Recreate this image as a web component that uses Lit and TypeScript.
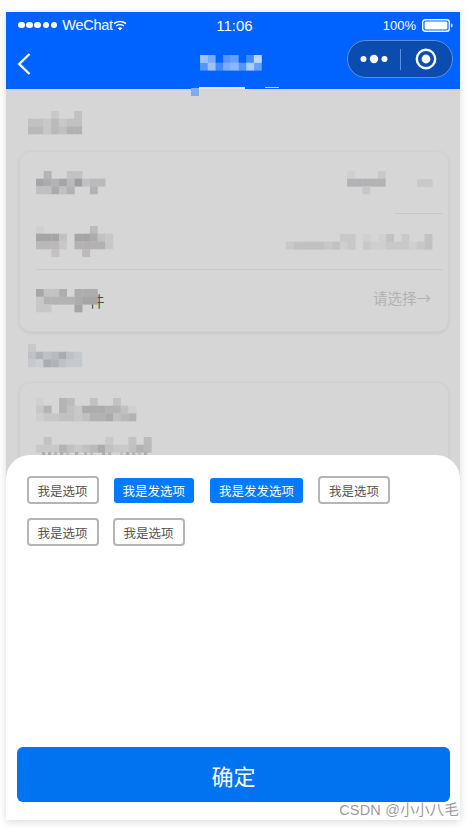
import { LitElement, html, css, svg } from "lit";
import { customElement, property } from "lit/decorators.js";

@customElement("pixel-block")
class PixelBlock extends LitElement {
  @property({ type: Array }) rows: string[] = [];
  @property({ type: Number }) cell = 7.7;
  @property() tone = "gray";

  static styles = css`
    :host { display: block; line-height: 0; }
    svg { display: block; overflow: visible; }
  `;

  private fill(d: number, col: number, row: number) {
    if (this.tone === "white") {
      const a = 0.12 + d * 0.07;
      return `rgba(255,255,255,${a})`;
    }
    const g = 214 - d * 7;
    const tint = (col * 3 + row * 5) % 3;
    if (this.tone === "cool") return `rgb(${g - 3},${g + 1},${g + 5})`;
    return `rgb(${g + (tint === 0 ? 2 : 0)},${g - (tint === 1 ? 2 : 0)},${g + (tint === 2 ? 2 : 0)})`;
  }

  render() {
    const w = Math.max(...this.rows.map((r) => r.length)) * this.cell;
    const h = this.rows.length * this.cell;
    return html`<svg width=${w} height=${h} viewBox="0 0 ${w} ${h}">
      ${this.rows.map((r, y) =>
        [...r].map((c, x) =>
          c === "."
            ? null
            : svg`<rect x=${x * this.cell} y=${y * this.cell} width=${this.cell + 0.2} height=${this.cell + 0.2} fill=${this.fill(+c, x, y)}></rect>`
        )
      )}
    </svg>`;
  }
}

const TITLE_A = ["...2..3", "3324233", "4424355"];
const TITLE_B = ["2......", "3534632", "2165322"];
const NAV_TITLE = ["75.34.29", "37256384"];
const ROW1 = [".5..33...", "765748344", "33635..5."];
const ROW1_R = ["1...2", "55555", "..2.."];
const ROW1_R2 = ["22"];
const ROW2 = ["1......4..", "7773.77632", "4442.55552", "..3...4..."];
const ROW2_R = [".......22.1.13.2..3", "233332312.211222123"];
const ROW3 = ["7336.666", "25555677", "22...7.."];
const ROW4 = ["1..54..3..3...", "25.5326665531.", "1223323556345."];
const ROW5 = [".3.......2..3.4", "222532346322354"];
const STRIP = ["..6.6.5.6.4..6..5.4...6.5...3.6.5.4.6..."];
const OPTIONS = [
  { label: "我是选项", on: false },
  { label: "我是发选项", on: true },
  { label: "我是发发选项", on: true },
  { label: "我是选项", on: false },
  { label: "我是选项", on: false },
  { label: "我是选项", on: false },
];

@customElement("app-root")
class AppRoot extends LitElement {
  static styles = css`
    :host {
      display: block;
      width: 474px;
      height: 827px;
      overflow: hidden;
      position: relative;
      background: #fff;
      font-family: "Liberation Sans", "Noto Sans CJK SC", sans-serif;
    }
    .frame {
      position: relative;
      box-sizing: border-box;
      height: 808px;
      margin: 12px 14px 7px 6px;
      display: flex;
      flex-direction: column;
      overflow: hidden;
      background: #d6d6d6;
    }
    .shadow {
      position: absolute;
      left: 6px;
      top: 12px;
      width: 454px;
      height: 808px;
      box-shadow: 0 2px 8px rgba(0, 0, 0, 0.14);
    }
    .head {
      background: #0062ff;
      color: #fff;
      height: 77px;
      flex: none;
      position: relative;
    }
    .status {
      height: 26px;
      padding: 0 7px 0 12px;
      display: grid;
      grid-template-columns: 1fr auto 1fr;
      align-items: center;
    }
    .left, .right { display: flex; align-items: center; }
    .right { justify-content: flex-end; }
    .dots { display: flex; gap: 1.6px; margin-right: 5px; }
    .dots i { width: 6.6px; height: 6.6px; border-radius: 50%; background: #fff; display: block; }
    .carrier { font-size: 14.5px; letter-spacing: -0.3px; }
    .wifi { display: block; }
    .time { font-size: 15px; margin-left: -2px; }
    .pct { font-size: 13px; margin-right: 6px; }
    .nav {
      height: 51px;
      padding: 0 7px 0 11px;
      display: grid;
      grid-template-columns: 1fr auto 1fr;
      align-items: center;
    }
    .capsule {
      justify-self: end;
      box-sizing: border-box;
      width: 106px;
      height: 38px;
      margin-top: -9px;
      border-radius: 19px;
      background: #0a4caf;
      border: 1px solid #5d8fe6;
      display: flex;
      align-items: center;
    }
    .cap-side { width: 52px; display: flex; justify-content: center; align-items: center; }
    .cap-div { width: 1px; height: 21px; background: #5d8fe6; flex: none; }
    .back { display: block; }
    .nav-title { margin-left: -9px; margin-top: -2px; }
    .streak {
      position: absolute;
      left: 185px;
      top: 75px;
      display: flex;
      align-items: flex-start;
    }
    .streak b { display: block; width: 8px; height: 8px; background: #7eabea; margin-top: 1px; }
    .streak i { display: block; width: 46px; height: 2px; background: #e3e7ee; }
    .streak u { display: block; width: 14px; height: 1px; background: #c5d3e8; margin-left: 20px; }

    .body { padding: 22px 11px 0 13px; flex: 1; overflow: hidden; }
    .title { margin-left: 9px; height: 23px; }
    .card {
      box-sizing: border-box;
      border-radius: 12px;
      border: 1px solid #d0d0d0;
      box-shadow: 0 1px 3px rgba(0, 0, 0, 0.09);
      padding: 0 5px 0 16px;
      margin-top: 17px;
    }
    .card.second { margin-top: 15px; height: 300px; padding-top: 15px; }
    .gap { margin-top: 12px; }
    .row {
      display: flex;
      align-items: center;
      justify-content: space-between;
      padding-right: 11px;
    }
    .row.a { height: 62px; position: relative; }
    .row.a::after {
      content: "";
      position: absolute;
      right: 0;
      bottom: 0;
      width: 48px;
      height: 1px;
      background: #c8c8c8;
    }
    .row.b { height: 56px; border-bottom: 1px solid #cacaca; box-sizing: border-box; }
    .row.c { height: 61px; }
    .r-group { display: flex; align-items: center; gap: 31px; }
    .named { display: flex; align-items: center; }
    .named span { font-size: 15px; color: #4a4a4a; margin-left: -8px; }
    .named pixel-block { position: relative; z-index: 1; }
    .hint {
      font-family: "Noto Sans CJK SC", sans-serif;
      font-size: 14.5px;
      line-height: 20px;
      color: #b2b2b2;
      margin-bottom: 6px;
      margin-right: 1px;
    }
    .stack { display: flex; flex-direction: column; gap: 16px; }
    .strip { margin-top: -16px; }

    .sheet {
      position: absolute;
      left: 0;
      right: 0;
      bottom: 0;
      top: 443px;
      background: #fff;
      border-radius: 24px 24px 0 0;
      display: flex;
      flex-direction: column;
      z-index: 2;
    }
    .options {
      flex: 1;
      display: flex;
      flex-wrap: wrap;
      align-content: flex-start;
      gap: 14px 14px;
      padding: 21px 20px 0 20.5px;
    }
    .opt {
      box-sizing: border-box;
      height: 28px;
      padding: 0 9px;
      border: 2px solid #b5b5b5;
      border-radius: 4px;
      font-size: 12.5px;
      color: #555;
      display: flex;
      align-items: center;
      justify-content: center;
      white-space: nowrap;
    }
    .opt.on {
      height: 25px;
      margin: 1.5px 1px;
      padding: 0 9px;
      border: 0;
      border-radius: 3px;
      background: #007aff;
      color: #fff;
    }
    .confirm {
      flex: none;
      height: 55px;
      margin: 0 10px 18px 11px;
      border-radius: 6px;
      background: #0073f0;
      color: #fff;
      font-size: 22px;
      display: flex;
      align-items: center;
      justify-content: center;
    }
    .mark {
      position: absolute;
      right: 15px;
      bottom: 8px;
      font-size: 14.5px;
      color: rgba(120, 120, 120, 0.75);
      z-index: 3;
      letter-spacing: 0.2px;
      line-height: 18px;
    }
  `;

  render() {
    return html`
      <div class="shadow"></div>
      <div class="frame">
        <div class="head">
          <div class="status">
            <div class="left">
              <div class="dots"><i></i><i></i><i></i><i></i><i></i></div>
              <span class="carrier">WeChat</span>
              <svg class="wifi" width="14" height="11" viewBox="0 0 14 11" fill="none" stroke="#fff" stroke-width="1.5">
                <path d="M1 3.6C4.4.8 9.6.8 13 3.6"></path>
                <path d="M3.2 6C5.3 4.4 8.7 4.4 10.8 6"></path>
                <path d="M5.3 8.3C6.3 7.6 7.7 7.6 8.7 8.3L7 10z" fill="#fff" stroke-width="1"></path>
              </svg>
            </div>
            <span class="time">11:06</span>
            <div class="right">
              <span class="pct">100%</span>
              <svg width="31" height="13" viewBox="0 0 31 13">
                <rect x="0.7" y="0.7" width="26.6" height="11.6" rx="2.5" fill="none" stroke="#fff" stroke-width="1.4"></rect>
                <rect x="2.6" y="2.6" width="22.8" height="7.8" rx="1" fill="#fff"></rect>
                <path d="M29 4.5c1 .2 1.6 1 1.6 2s-.6 1.8-1.6 2z" fill="#fff"></path>
              </svg>
            </div>
          </div>
          <div class="nav">
            <svg class="back" width="14" height="22" viewBox="0 0 14 22" fill="none" stroke="#fff" stroke-width="2.3">
              <path d="M12.5 1 2.2 11l10.3 10"></path>
            </svg>
            <pixel-block class="nav-title" tone="white" .rows=${NAV_TITLE}></pixel-block>
            <div class="capsule">
              <div class="cap-side">
                <svg width="28" height="10" viewBox="0 0 28 10" fill="#fff">
                  <circle cx="3.5" cy="5" r="3"></circle>
                  <circle cx="14" cy="5" r="4.2"></circle>
                  <circle cx="24.5" cy="5" r="3"></circle>
                </svg>
              </div>
              <div class="cap-div"></div>
              <div class="cap-side">
                <svg width="22" height="22" viewBox="0 0 22 22" fill="none">
                  <circle cx="11" cy="11" r="9.2" stroke="#fff" stroke-width="2.4"></circle>
                  <circle cx="11" cy="11" r="4.4" fill="#fff"></circle>
                </svg>
              </div>
            </div>
          </div>
          <div class="streak"><b></b><i></i><u></u></div>
        </div>

        <div class="body">
          <pixel-block class="title" .rows=${TITLE_A}></pixel-block>
          <div class="card">
            <div class="row a">
              <pixel-block .rows=${ROW1}></pixel-block>
              <div class="r-group">
                <pixel-block .rows=${ROW1_R}></pixel-block>
                <pixel-block .rows=${ROW1_R2}></pixel-block>
              </div>
            </div>
            <div class="row b">
              <pixel-block .rows=${ROW2}></pixel-block>
              <pixel-block .rows=${ROW2_R}></pixel-block>
            </div>
            <div class="row c">
              <div class="named">
                <pixel-block .rows=${ROW3}></pixel-block>
                <span>件</span>
              </div>
              <span class="hint">请选择→</span>
            </div>
          </div>
          <pixel-block class="title gap" tone="cool" .rows=${TITLE_B}></pixel-block>
          <div class="card second">
            <div class="stack">
              <pixel-block .rows=${ROW4}></pixel-block>
              <pixel-block .rows=${ROW5}></pixel-block>
              <pixel-block class="strip" .cell=${3} .rows=${STRIP}></pixel-block>
            </div>
          </div>
        </div>

        <div class="sheet">
          <div class="options">
            ${OPTIONS.map((o) => html`<div class="opt ${o.on ? "on" : ""}">${o.label}</div>`)}
          </div>
          <div class="confirm">确定</div>
        </div>
      </div>
      <div class="mark">CSDN @小小八毛</div>
    `;
  }
}
